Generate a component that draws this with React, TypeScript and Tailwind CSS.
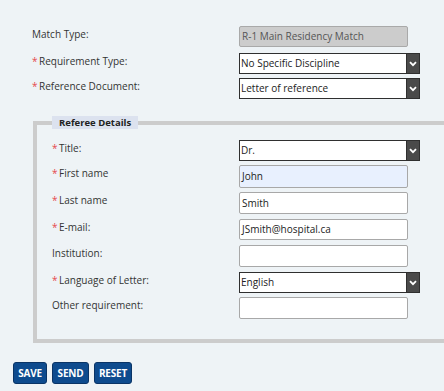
import React from "react";

const font = { fontFamily: '"Open Sans", "Noto Sans", sans-serif' };

function Label({ text, req }: { text: string; req?: boolean }) {
  return (
    <div className="flex items-start pt-[1px] text-[10px] leading-[14px] text-[#333333]">
      {req ? <span className="text-[#e5484d] w-[7px]">*</span> : null}
      <span>{text}</span>
    </div>
  );
}

function TextBox({ value, autofill, disabled, h }: { value?: string; autofill?: boolean; disabled?: boolean; h: string }) {
  const bg = disabled ? "bg-[#cccccc] border-[#a9a9a9] text-[#555555]" : autofill ? "bg-[#e8f0fe] border-[#a8a8a8] text-[#222222]" : "bg-white border-[#a8a8a8] text-[#222222]";
  return (
    <div className={`w-[169px] ${h} border rounded-[2px] flex items-center px-[2px] text-[10px] ${bg}`}>
      {value}
    </div>
  );
}

function Select({ value }: { value: string }) {
  return (
    <div className="w-[181px] h-[21px] flex">
      <div className="flex-1 h-full bg-white border border-[#2f2f2f] border-r-0 flex items-center pl-[1px] text-[10px] text-[#222222]">
        {value}
      </div>
      <div className="w-[14px] h-full bg-[#4a4a4a] border border-[#2f2f2f] flex items-center justify-center">
        <svg width="8" height="6" viewBox="0 0 8 6">
          <path d="M1 1.2 L4 4.2 L7 1.2" stroke="white" strokeWidth="1.8" fill="none" />
        </svg>
      </div>
    </div>
  );
}

function Row({ label, req, children, mt, labelW }: { label: string; req?: boolean; children: React.ReactNode; mt: string; labelW: string }) {
  return (
    <div className={`flex ${mt}`}>
      <div className={labelW}>
        <Label text={label} req={req} />
      </div>
      {children}
    </div>
  );
}

export default function App() {
  return (
    <div style={font} className="w-[444px] h-[391px] bg-[#eef3f6] overflow-hidden">
      <div className="pt-[26px] pl-[32px]">
        <Row label="Match Type:" mt="mt-0" labelW="w-[207px]">
          <TextBox value="R-1 Main Residency Match" disabled h="h-[21px]" />
        </Row>
        <Row label="Requirement Type:" req mt="mt-[6px]" labelW="w-[207px]">
          <Select value="No Specific Discipline" />
        </Row>
        <Row label="Reference Document:" req mt="mt-[4px]" labelW="w-[207px]">
          <Select value="Letter of reference" />
        </Row>
      </div>
      <fieldset className="ml-[33px] mt-[17px] w-[430px] border-4 border-[#cccccc] pl-[15px] pb-[20px]">
        <legend className="bg-[#dce2ef] px-[7px] text-[9.5px] font-bold leading-[13px] text-[#222222]">Referee Details</legend>
        <Row label="Title:" req mt="mt-[11px]" labelW="w-[187px]">
          <Select value="Dr." />
        </Row>
        <Row label="First name" req mt="mt-[4px]" labelW="w-[187px]">
          <TextBox value="John" autofill h="h-[23px]" />
        </Row>
        <Row label="Last name" req mt="mt-[4px]" labelW="w-[187px]">
          <TextBox value="Smith" h="h-[22px]" />
        </Row>
        <Row label="E-mail:" req mt="mt-[5px]" labelW="w-[187px]">
          <TextBox value="JSmith@hospital.ca" h="h-[21px]" />
        </Row>
        <Row label="Institution:" mt="mt-[5px]" labelW="w-[187px]">
          <TextBox h="h-[22px]" />
        </Row>
        <Row label="Language of Letter:" req mt="mt-[5px]" labelW="w-[187px]">
          <Select value="English" />
        </Row>
        <Row label="Other requirement:" mt="mt-[4px]" labelW="w-[187px]">
          <TextBox h="h-[22px]" />
        </Row>
      </fieldset>
      <div className="flex gap-[5px] pl-[13px] mt-[19px]">
        {["SAVE", "SEND", "RESET"].map((t) => (
          <button
            key={t}
            className="h-[22px] px-0 bg-[#0e4b8e] border border-[#0a3466] rounded-[3px] text-white text-[10px] font-bold tracking-[-0.2px]"
            style={t === "SAVE" ? { width: 34 } : t === "SEND" ? { width: 37 } : { width: 38 }}
          >
            {t}
          </button>
        ))}
      </div>
    </div>
  );
}
